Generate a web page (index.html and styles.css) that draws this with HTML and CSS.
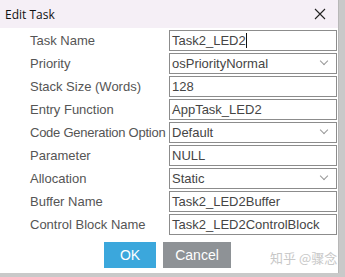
FILE: index.html
```html
<!DOCTYPE html>
<html lang="en">
<head>
  <meta charset="UTF-8" />
  <title>Edit Task</title>
  <link rel="stylesheet" href="styles.css">
</head>
<body>
  <div class="dialog">
    <div class="titlebar">
      <span class="title">Edit Task</span>
      <svg class="close" width="12" height="12" viewBox="0 0 12 12"><path d="M1 1 L11 11 M11 1 L1 11" stroke="#222" stroke-width="1.1" fill="none"/></svg>
    </div>

    <div class="form">
      <div class="label">Task Name</div>
      <div class="field">Task2_LED2<span class="caret"></span></div>

      <div class="label">Priority</div>
      <div class="field select">osPriorityNormal</div>

      <div class="label">Stack Size (Words)</div>
      <div class="field">128</div>

      <div class="label">Entry Function</div>
      <div class="field">AppTask_LED2</div>

      <div class="label tight">Code Generation Option</div>
      <div class="field select">Default</div>

      <div class="label">Parameter</div>
      <div class="field">NULL</div>

      <div class="label">Allocation</div>
      <div class="field select">Static</div>

      <div class="label">Buffer Name</div>
      <div class="field">Task2_LED2Buffer</div>

      <div class="label">Control Block Name</div>
      <div class="field">Task2_LED2ControlBlock</div>
    </div>

    <div class="buttons">
      <button class="btn ok">OK</button>
      <button class="btn cancel">Cancel</button>
      <span class="watermark">知乎 @骤念</span>
    </div>
  </div>
</body>
</html>
```

FILE: styles.css
```css
body {
  margin: 0;
  background: #c9c9c9;
  height: 277px;
  overflow: hidden;
}

.dialog {
  width: 338px;
  height: 273px;
  background: #fff;
  border-right: 1px solid #b8b8b8;
  font-family: "Liberation Sans", Arial, sans-serif;
}

.titlebar {
  height: 28px;
  background: #f5eff6;
  display: flex;
  align-items: center;
  justify-content: space-between;
  padding: 0 12px 0 5px;
}

.title {
  font-family: "Open Sans", "Noto Sans", sans-serif;
  font-size: 12px;
  color: #111;
}

.form {
  display: grid;
  grid-template-columns: 139px 168px;
  row-gap: 2px;
  padding: 2px 0 0 30px;
}

.label {
  height: 21px;
  line-height: 21px;
  font-size: 13px;
  color: #555;
  white-space: nowrap;
}

.tight {
  letter-spacing: -0.25px;
}

.field {
  position: relative;
  height: 19px;
  line-height: 19px;
  border: 1px solid #8c8c8c;
  padding-left: 2px;
  font-size: 13px;
  color: #454545;
  white-space: nowrap;
}

.select::after {
  content: "";
  position: absolute;
  right: 9px;
  top: 4px;
  width: 5px;
  height: 5px;
  border-right: 1px solid #999;
  border-bottom: 1px solid #999;
  transform: rotate(45deg);
}

.caret {
  display: inline-block;
  width: 1px;
  height: 15px;
  background: #111;
  vertical-align: -3px;
}

.buttons {
  display: flex;
  align-items: center;
  gap: 7px;
  padding: 7px 0 0 104px;
}

.btn {
  height: 26px;
  border: none;
  color: #fff;
  font-family: "Liberation Sans", Arial, sans-serif;
  font-size: 14px;
  padding: 0;
}

.ok {
  width: 52px;
  background: #3ba7dc;
}

.cancel {
  width: 68px;
  background: #8e9296;
}

.watermark {
  margin-left: 32px;
  margin-top: 4px;
  font-family: "Noto Sans CJK SC", sans-serif;
  font-size: 13px;
  color: #c8c8c8;
}
```
